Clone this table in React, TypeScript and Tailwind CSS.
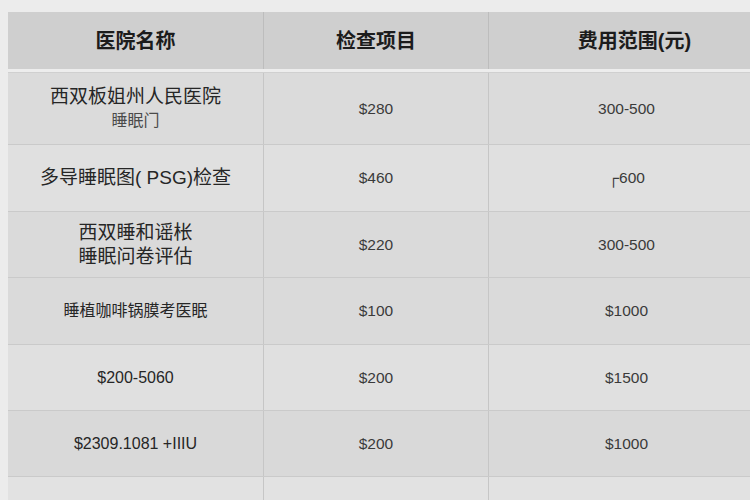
const rows = [
  { name: ["西双板姐州人民医院", "睡眠门"], size: "text-[19px]", item: "$280", range: "300-500", bg: "bg-[#dbdbdb]", h: "h-[72px]" },
  { name: ["多导睡眠图( PSG)检查"], size: "text-[19px]", item: "$460", range: "┌600", bg: "bg-[#e0e0e0]", h: "h-[67px]" },
  { name: ["西双睡和谣枨", "睡眠问卷评估"], size: "text-[19px]", item: "$220", range: "300-500", bg: "bg-[#dadada]", h: "h-[66px]" },
  { name: ["睡植咖啡锅膜考医眠"], size: "text-[16px]", item: "$100", range: "$1000", bg: "bg-[#dadada]", h: "h-[67px]" },
  { name: ["$200-5060"], size: "text-[16px]", item: "$200", range: "$1500", bg: "bg-[#e0e0e0]", h: "h-[66px]" },
  { name: ["$2309.1081 +IIIU"], size: "text-[16px]", item: "$200", range: "$1000", bg: "bg-[#d9d9d9]", h: "h-[66px]" },
  { name: [""], size: "text-[16px]", item: "", range: "", bg: "bg-[#e2e2e2]", h: "h-[66px]" },
];

const cjk = "font-['Liberation_Sans','Noto_Sans_CJK_SC',sans-serif]";

export default function App() {
  return (
    <div className={`h-[500px] w-[750px] overflow-hidden bg-[#ececec] pl-2 pt-3 ${cjk}`}>
      <div className="w-[760px]">
        <div className="grid h-[57px] grid-cols-[256px_225px_279px] bg-[#cfcfcf] text-[20px] font-bold text-[#1c1c1c]">
          <div className="flex items-center justify-center border-r border-[#bdbdbd]">医院名称</div>
          <div className="flex items-center justify-center border-r border-[#bdbdbd]">检查项目</div>
          <div className="flex items-center justify-center pl-[12px]">费用范围(元)</div>
        </div>
        <div className="h-[4px] border-b border-[#d0d0d0] bg-[#ededed]" />
        {rows.map((r, i) => (
          <div
            key={i}
            className={`grid grid-cols-[256px_225px_279px] border-b border-[#cacaca] ${r.bg} ${r.h}`}
          >
            <div className={`flex flex-col items-center justify-center border-r border-[#c6c6c6] leading-[24px] text-[#262626] ${r.size}`}>
              {r.name.map((line, j) => (
                <span key={j} className={j === 1 && i === 0 ? "text-[16px] text-[#4a4a4a]" : ""}>
                  {line}
                </span>
              ))}
            </div>
            <div className="flex items-center justify-center border-r border-[#c6c6c6] text-[15.5px] text-[#3a3a3a]">
              {r.item}
            </div>
            <div className="flex items-center justify-center pr-[4px] text-[15.5px] text-[#3a3a3a]">
              {r.range}
            </div>
          </div>
        ))}
      </div>
    </div>
  );
}
